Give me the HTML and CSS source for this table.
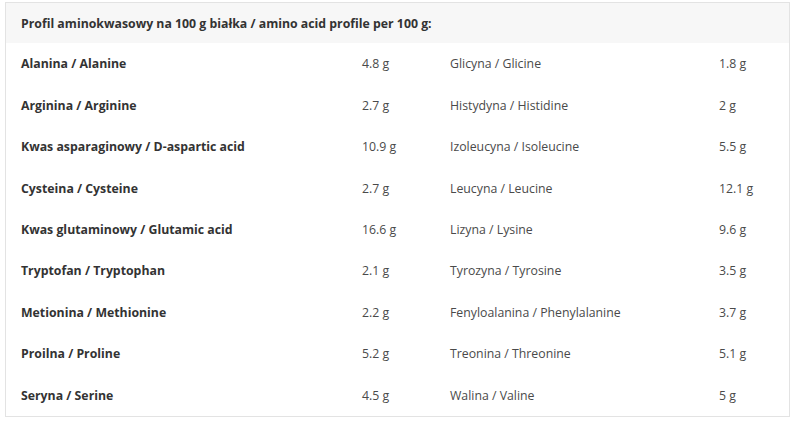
FILE: index.html
```html
<!DOCTYPE html>
<html lang="pl">
<head>
<meta charset="utf-8">
<title>Profil aminokwasowy</title>
<link rel="stylesheet" href="styles.css">
</head>
<body>
<div class="profile">
  <div class="profile-head">Profil aminokwasowy na 100 g białka / amino acid profile per 100 g:</div>
  <div class="profile-grid">
    <div class="name">Alanina / Alanine</div><div class="val">4.8 g</div><div class="name2">Glicyna / Glicine</div><div class="val">1.8 g</div>
    <div class="name">Arginina / Arginine</div><div class="val">2.7 g</div><div class="name2">Histydyna / Histidine</div><div class="val">2 g</div>
    <div class="name">Kwas asparaginowy / D-aspartic acid</div><div class="val">10.9 g</div><div class="name2">Izoleucyna / Isoleucine</div><div class="val">5.5 g</div>
    <div class="name">Cysteina / Cysteine</div><div class="val">2.7 g</div><div class="name2">Leucyna / Leucine</div><div class="val">12.1 g</div>
    <div class="name">Kwas glutaminowy / Glutamic acid</div><div class="val">16.6 g</div><div class="name2">Lizyna / Lysine</div><div class="val">9.6 g</div>
    <div class="name">Tryptofan / Tryptophan</div><div class="val">2.1 g</div><div class="name2">Tyrozyna / Tyrosine</div><div class="val">3.5 g</div>
    <div class="name">Metionina / Methionine</div><div class="val">2.2 g</div><div class="name2">Fenyloalanina / Phenylalanine</div><div class="val">3.7 g</div>
    <div class="name">Proilna / Proline</div><div class="val">5.2 g</div><div class="name2">Treonina / Threonine</div><div class="val">5.1 g</div>
    <div class="name">Seryna / Serine</div><div class="val">4.5 g</div><div class="name2">Walina / Valine</div><div class="val">5 g</div>
  </div>
</div>
</body>
</html>
```
FILE: styles.css
```css
html, body {
  margin: 0;
  padding: 0;
  background: #ffffff;
}
body {
  font-family: "Open Sans", "Liberation Sans", sans-serif;
  font-size: 12.3px;
  color: #333333;
}
.profile {
  margin: 2px 0 0 5px;
  width: 785px;
  height: 415px;
  box-sizing: border-box;
  border: 1px solid #e3e3e3;
  display: flex;
  flex-direction: column;
}
.profile-head {
  height: 40px;
  flex: 0 0 40px;
  background: #f7f7f7;
  display: flex;
  align-items: center;
  padding-left: 15px;
  font-weight: 700;
  color: #333333;
}
.profile-grid {
  flex: 1;
  display: grid;
  grid-template-columns: 341px 88px 269px 1fr;
  grid-template-rows: repeat(9, 1fr);
  padding-left: 15px;
  align-items: center;
}
.name {
  font-weight: 700;
  color: #333333;
}
.name2 {
  color: #4a4a4a;
}
.val {
  color: #4a4a4a;
}
```
